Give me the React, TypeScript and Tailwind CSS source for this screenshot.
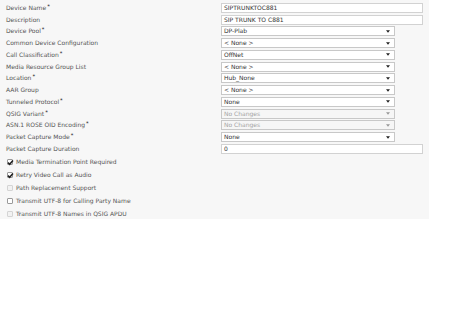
import React from "react";

type Row = { label: string; req?: boolean; kind: "text" | "select"; value: string; disabled?: boolean };

const rows: Row[] = [
  { label: "Device Name", req: true, kind: "text", value: "SIPTRUNKTOC881" },
  { label: "Description", kind: "text", value: "SIP TRUNK TO C881" },
  { label: "Device Pool", req: true, kind: "select", value: "DP-Plab" },
  { label: "Common Device Configuration", kind: "select", value: "< None >" },
  { label: "Call Classification", req: true, kind: "select", value: "OffNet" },
  { label: "Media Resource Group List", kind: "select", value: "< None >" },
  { label: "Location", req: true, kind: "select", value: "Hub_None" },
  { label: "AAR Group", kind: "select", value: "< None >" },
  { label: "Tunneled Protocol", req: true, kind: "select", value: "None" },
  { label: "QSIG Variant", req: true, kind: "select", value: "No Changes", disabled: true },
  { label: "ASN.1 ROSE OID Encoding", req: true, kind: "select", value: "No Changes", disabled: true },
  { label: "Packet Capture Mode", req: true, kind: "select", value: "None" },
  { label: "Packet Capture Duration", kind: "text", value: "0" },
];

const checks = [
  { label: "Media Termination Point Required", checked: true },
  { label: "Retry Video Call as Audio", checked: true },
  { label: "Path Replacement Support", disabled: true },
  { label: "Transmit UTF-8 for Calling Party Name" },
  { label: "Transmit UTF-8 Names in QSIG APDU", disabled: true },
];

function Check({ checked, disabled }: { checked?: boolean; disabled?: boolean }) {
  return (
    <span
      className={
        "relative inline-block w-[6px] h-[6px] border rounded-[1px] " +
        (disabled ? "border-[#d4d4d4] bg-[#f2f2f2]" : "border-[#9a9a9a] bg-white")
      }
    >
      {checked && (
        <svg viewBox="0 0 8 8" className="absolute left-[-1px] top-[-1px] w-[7px] h-[7px]">
          <path d="M1.2 4.2 L3 6 L6.8 1.6" stroke="#222" strokeWidth="1.8" fill="none" />
        </svg>
      )}
    </span>
  );
}

export default function App() {
  return (
    <div className="w-[474px] h-[316px] bg-white" style={{ fontFamily: '"DejaVu Sans", Verdana, sans-serif' }}>
      <div className="w-[429px] h-[219px] bg-[#f7f7f7] pt-[2px] text-[6px] text-[#555]">
        {rows.map((r) => (
          <div key={r.label} className="flex items-center h-[11.75px]">
            <div className="w-[221px] pl-[6px] leading-none">
              {r.label}
              {r.req && <span className="relative top-[-2px] text-[5px] font-bold text-[#333] ml-[1px]">*</span>}
            </div>
            {r.kind === "text" ? (
              <div className="w-[202px] h-[10px] bg-white border border-[#d2d2d2] flex items-center pl-[2px] leading-none text-[#333]">
                {r.value}
              </div>
            ) : (
              <div
                className={
                  "w-[174px] h-[10px] border border-[#c8c8c8] flex items-center justify-between pl-[2px] pr-[4px] leading-none " +
                  (r.disabled ? "bg-[#f6f6f6] text-[#a5a5a5]" : "bg-white text-[#333]")
                }
              >
                <span>{r.value}</span>
                <svg viewBox="0 0 6 4" className="w-[4px] h-[3px]">
                  <path d="M0 0 L6 0 L3 4 Z" fill={r.disabled ? "#999" : "#222"} />
                </svg>
              </div>
            )}
          </div>
        ))}
        <div className="flex flex-col pt-[1px]">
          {checks.map((c) => (
            <div key={c.label} className="flex items-center h-[13px] pl-[7px] gap-[3px] leading-none">
              <Check checked={c.checked} disabled={c.disabled} />
              <span>{c.label}</span>
            </div>
          ))}
        </div>
      </div>
    </div>
  );
}
